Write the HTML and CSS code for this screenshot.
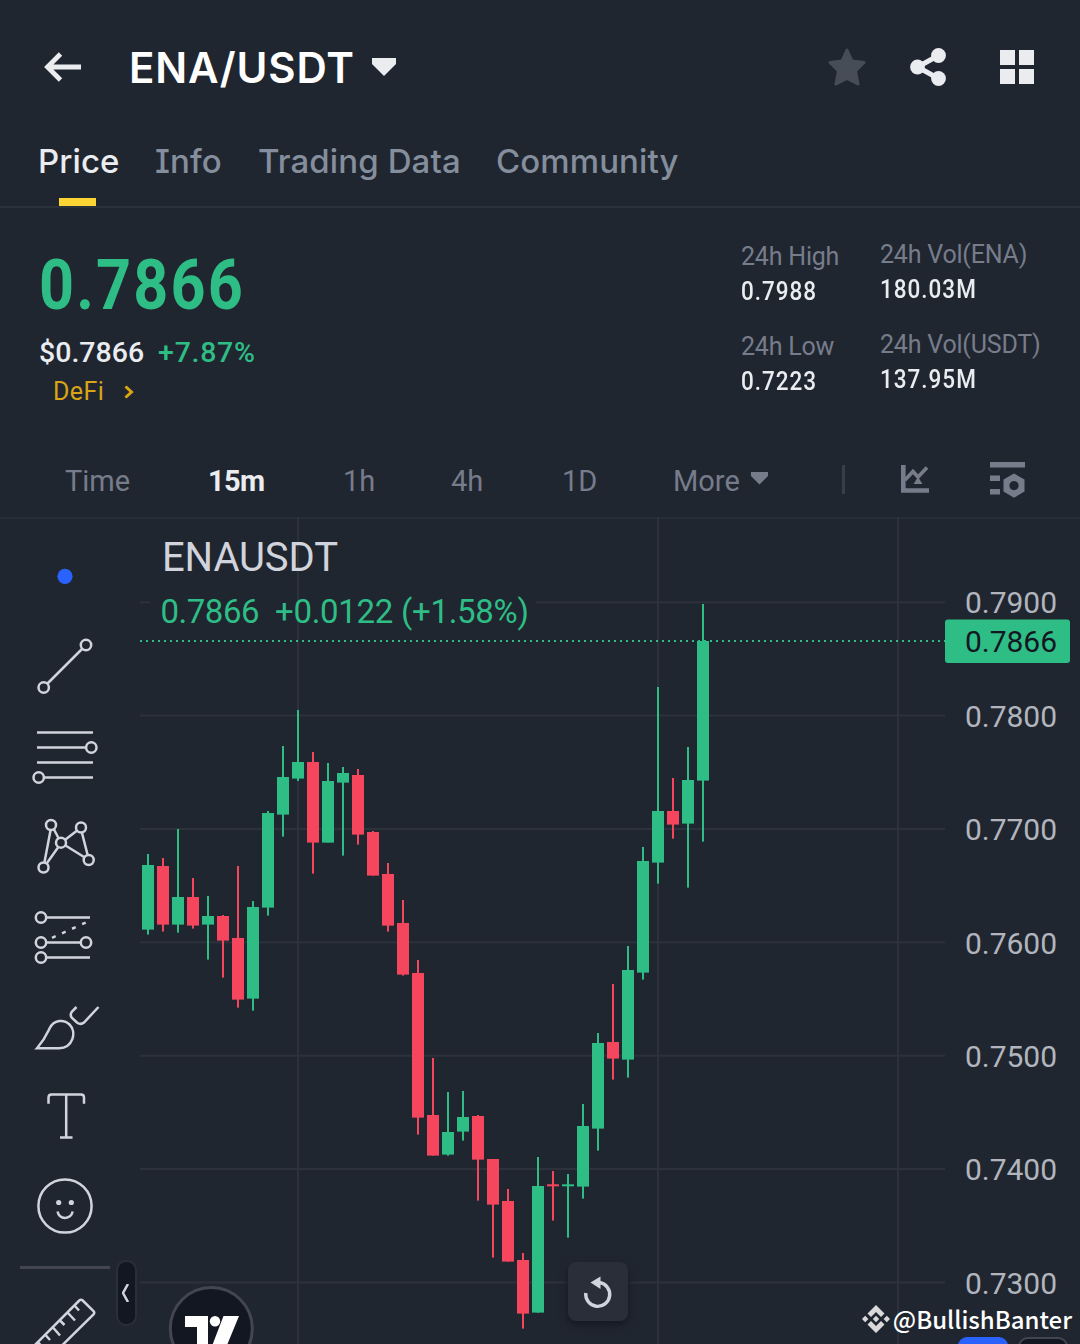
FILE: index.html
```html
<!DOCTYPE html>
<html lang="en">
<head>
  <meta charset="UTF-8">
  <meta name="viewport" content="width=device-width, initial-scale=1.0">
  <title>ENA/USDT</title>
  <link rel="stylesheet" href="styles.css">
</head>
<body>
  <header class="topbar">
    <svg class="back" width="40" height="32" viewBox="0 0 40 32"><path d="M38 16H4M17.500 3L4.500 16L17.500 29" fill="none" stroke="#eaecef" stroke-width="4.800"/></svg>
    <h1>ENA/USDT</h1>
    <svg width="24" height="18" viewBox="0 0 24 18"><path d="M0 0H24V6L12 18L0 6Z" fill="#eaecef"/></svg>
    <div class="actions">
      <svg width="38" height="38" viewBox="0 0 38 38"><path d="M19 2L24 13L36 14.500L27.500 23L30 36L19 30.500L8 36L10.500 23L2 14.500L14 13Z" fill="#474d57" stroke="#474d57" stroke-width="3" stroke-linejoin="round"/></svg>
      <svg width="36" height="38" viewBox="0 0 36 38">
        <path d="M28.500 7.500L7.500 19L28.500 30.500" fill="none" stroke="#eaecef" stroke-width="5"/>
        <g fill="#eaecef"><circle cx="28.500" cy="7.500" r="7.400"/><circle cx="7.500" cy="19" r="7.400"/><circle cx="28.500" cy="30.500" r="7.400"/></g>
      </svg>
      <svg width="34" height="34" viewBox="0 0 34 34"><path d="M0 0H15V15H0ZM19 0H34V15H19ZM0 19H15V34H0ZM19 19H34V34H19Z" fill="#eaecef"/></svg>
    </div>
  </header>

  <nav class="tabs">
    <a class="active">Price</a>
    <a>Info</a>
    <a>Trading Data</a>
    <a>Community</a>
  </nav>

  <section class="summary">
    <div class="quote">
      <div class="last">0.7866</div>
      <div class="change"><span>$0.7866</span><span class="up">+7.87%</span></div>
      <div class="tag">DeFi
        <svg width="10" height="14" viewBox="0 0 10 14"><path d="M1.500 1.500L7.500 7L1.500 12.500" fill="none" stroke="#d9a514" stroke-width="3"/></svg>
      </div>
    </div>
    <dl class="stats">
      <div><dt>24h High</dt><dd>0.7988</dd></div>
      <div><dt>24h Low</dt><dd>0.7223</dd></div>
    </dl>
    <dl class="stats volume">
      <div><dt>24h Vol(ENA)</dt><dd>180.03M</dd></div>
      <div><dt>24h Vol(USDT)</dt><dd>137.95M</dd></div>
    </dl>
  </section>

  <div class="intervals">
    <span>Time</span>
    <span class="active">15m</span>
    <span>1h</span>
    <span>4h</span>
    <span>1D</span>
    <span class="more">More <svg width="17" height="13" viewBox="0 0 17 13"><path d="M0 0H17V4L8.500 12.500L0 4Z" fill="#777c8b"/></svg></span>
    <i class="separator"></i>
    <svg class="chart-type" width="28" height="28" viewBox="0 0 28 28">
      <path d="M2.300 0V25.500H28" fill="none" stroke="#777c8b" stroke-width="4.600"/>
      <path d="M4 15L12 6.500L17 12L26 2.500" fill="none" stroke="#777c8b" stroke-width="3.600"/>
      <path d="M17 12L21.500 19H12.500Z" fill="#777c8b"/>
    </svg>
    <svg width="36" height="36" viewBox="0 0 36 36">
      <path d="M0 0H35V5.500H0ZM0 13.500H10V19H0ZM0 27H10V32.500H0Z" fill="#777c8b"/>
      <path fill-rule="evenodd" d="M24 11.500L34.500 17.500V29.500L24 35.800L13.500 29.500V17.500ZM24 19a4.600 4.600 0 1 0 0.010 0Z" fill="#777c8b"/>
    </svg>
  </div>

  <main class="chart">
    <aside class="tools">
      <svg viewBox="0 0 140 90"><circle cx="65" cy="45.300" r="7.600" fill="#2962ff" stroke="none"/></svg>
      <svg viewBox="0 0 140 90"><path d="M47.500 62.500L82 28"/><circle cx="86" cy="24" r="5.200"/><circle cx="43.700" cy="66.500" r="5.200"/></svg>
      <svg viewBox="0 0 140 90"><path d="M37 21.500H93M37 36.500H86M37 51.500H93M44 66.500H93"/><circle cx="91.300" cy="36.500" r="5.200"/><circle cx="38.700" cy="66.500" r="5.200"/></svg>
      <svg viewBox="0 0 140 90">
        <path d="M50.500 29.500L44.500 61M54 28.500L58.500 37M47 62L58 46.500M65.500 38.500L76.500 30M65.500 44.500L84 56M82 32L87.500 53.500"/>
        <circle cx="51" cy="24" r="5"/><circle cx="81" cy="26.500" r="5"/><circle cx="61" cy="41.700" r="5"/><circle cx="43.500" cy="66.500" r="5"/><circle cx="88.700" cy="59" r="5"/>
      </svg>
      <svg viewBox="0 0 140 90">
        <path d="M46.500 26.500H90M46.500 51.500H80.500M46.500 66.500H90"/><path d="M52 46.800L87 31" stroke-dasharray="4 7"/>
        <circle cx="41" cy="26.500" r="5.200"/><circle cx="41" cy="51.500" r="5.200"/><circle cx="86" cy="51.500" r="5.200"/><circle cx="41" cy="66.500" r="5.200"/>
      </svg>
      <svg viewBox="0 0 140 90"><path d="M37 67.200C45 58 46.500 54 49.500 47.500C54 38.500 64 38 69.500 43.500C77 51 73 67 59 67.200ZM76.500 26L72 30.500Q69.500 34 72 37L77.500 42Q81 44 84 41.500L98.500 26"/></svg>
      <svg viewBox="0 0 140 90"><path d="M48.500 32.800V26.500Q48.500 23.500 51.500 23.500H81Q84 23.500 84 26.500V32.800M66.200 23.500V66.500M60 66.500H72.500"/></svg>
      <svg viewBox="0 0 140 90"><circle cx="65" cy="45" r="26.600"/><path d="M57.500 50.500C59.500 59 70.500 59 72.700 50.500"/><g fill="#d1d4dc" stroke="none"><circle cx="58.700" cy="41.500" r="2.600"/><circle cx="71.300" cy="41.500" r="2.600"/></g></svg>
      <hr>
      <svg class="ruler" viewBox="0 0 140 75"><path d="M20 91L79.300 31.500Q81 30 82.700 31.500L93.500 42Q95 43.700 93.500 45.500L33 105M74.500 36.500L79 41.500M67.500 43.500L75 51.500M60 51.500L64.500 56M53 58.500L60 66.500M45.500 66L50 71M38 73.500L44 79.500"/></svg>
      <button class="collapse"><svg viewBox="0 0 8 18"><path d="M6 0L1 9L6 18"/></svg></button>
    </aside>

    <svg class="plot" viewBox="140 517 940 827">
      <g id="grid"></g>
      <path class="last-line" d="M140 641H945"/>
      <g id="candles"></g>
      <g id="axis"></g>
      <rect x="945" y="619.500" width="125" height="43.500" rx="3" fill="#2ebd85"/>
      <text class="axis-text current" x="965" y="652" textLength="92">0.7866</text>
      <rect x="150" y="594" width="386" height="36" fill="#202630"/>
      <path class="divider" d="M298 594V630"/>
      <text class="symbol" x="162" y="571" textLength="176">ENAUSDT</text>
      <text class="delta" x="160.500" y="623" textLength="99">0.7866</text>
      <text class="delta" x="275" y="623" textLength="254">+0.0122 (+1.58%)</text>
      <g>
        <circle cx="211.300" cy="1328.500" r="41" fill="#131722" stroke="#434651" stroke-width="3"/>
        <path d="M185 1316H208V1350H197V1327H185ZM223.500 1316H239L225 1350H210.500Z" fill="#fff"/>
        <circle cx="215" cy="1321.300" r="5.200" fill="#fff"/>
      </g>
      <g class="reset">
        <rect x="568" y="1262" width="60" height="59" rx="8" fill="#2a2e39"/>
        <path d="M585.800 1293A12 12 0 1 0 599.500 1282.500" fill="none" stroke="#d1d4dc" stroke-width="3.400"/>
        <path d="M590.500 1282.500L600.500 1276.500V1289Z" fill="#d1d4dc"/>
      </g>
      <rect x="958" y="1337" width="50" height="30" rx="9" fill="#2962ff"/>
      <rect x="1019" y="1338" width="48" height="30" rx="9" fill="#131722" stroke="#434651" stroke-width="2"/>
    </svg>

    <div class="watermark">
      <svg width="28" height="28" viewBox="0 0 28 28"><path d="M14 0L22.500 8.500L19 12L14 7L9 12L5.500 8.500ZM14 28L22.500 19.500L19 16L14 21L9 16L5.500 19.500ZM14 10.800L17.200 14L14 17.200L10.800 14ZM3.200 10.800L6.400 14L3.200 17.200L0 14ZM24.800 10.800L28 14L24.800 17.200L21.600 14Z" fill="#d9d9d9"/></svg>
      <span>@BullishBanter</span>
    </div>
  </main>

  <script>
    const UP = '#2ebd85';
    const DOWN = '#f6465d';

    // direction, high, body top, body bottom, low
    const candles = [
      [1, 854, 865, 929.6, 934.6], [0, 858, 866, 924.6, 931.6], [1, 829, 897, 924.6, 932.6],
      [0, 878, 897, 925.6, 928.6], [1, 896, 916, 924.6, 959.6], [0, 915, 916, 940.6, 977.6],
      [0, 866, 938, 999.6, 1007.6], [1, 901, 907, 998.6, 1010.6], [1, 811, 813, 907.6, 915.6],
      [1, 746, 777, 814.6, 836.6], [1, 710, 762, 778.6, 781], [0, 752, 762, 842.6, 873.6],
      [1, 763, 781, 842.6, 842.6], [1, 767, 773, 782.6, 855.6], [0, 769, 775, 834.6, 844.6],
      [0, 831, 832, 875.6, 875.6], [0, 863, 874, 925.6, 931.6], [0, 900, 923, 974.6, 975.6],
      [0, 960, 973, 1117.6, 1134.6], [0, 1058, 1115, 1155.6, 1155.6], [1, 1092, 1132, 1154.6, 1155.6],
      [1, 1091, 1117, 1131.6, 1140.6], [0, 1115, 1116, 1159.6, 1200.6], [0, 1159, 1159, 1204.6, 1257.6],
      [0, 1189, 1201, 1261.6, 1261.6], [0, 1253, 1260, 1313.6, 1328.6], [1, 1157, 1186, 1312.6, 1312.6],
      [0, 1171, 1184.3, 1186.3, 1220.6], [1, 1174, 1184.3, 1186.3, 1237.6], [1, 1104, 1126, 1186.6, 1198.6],
      [1, 1033, 1043, 1128.6, 1150.6], [0, 984, 1042, 1058.6, 1079.6], [1, 946, 970, 1059.6, 1077.6],
      [1, 847, 861, 972.6, 979.6], [1, 687, 811, 862.6, 883.6], [0, 778, 811, 824.6, 838.6],
      [1, 747, 780, 823.6, 887.6], [1, 604, 641, 780.6, 841.6]
    ];

    let bars = '';
    candles.forEach(([up, high, top, bottom, low], i) => {
      const x = 148 + i * 15;
      bars += `<g fill="${up ? UP : DOWN}"><rect x="${x - 1}" y="${high}" width="2" height="${low - high}"/>` +
        `<rect x="${x - 6}" y="${top}" width="12" height="${bottom - top}"/></g>`;
    });
    document.getElementById('candles').innerHTML = bars;

    let lines = '';
    let labels = '';
    for (let i = 0; i < 7; i++) {
      const y = 602.2 + i * 113.38;
      lines += `<path d="M140 ${y}H945"/>`;
      labels += `<text class="axis-text" x="965" y="${Math.round(y + 11.2)}" textLength="92">${(0.79 - i * 0.01).toFixed(4)}</text>`;
    }
    [298, 658, 898].forEach(x => lines += `<path d="M${x} 517V1344"/>`);
    document.getElementById('grid').innerHTML = lines;
    document.getElementById('axis').innerHTML = labels;
  </script>
</body>
</html>
```
FILE: styles.css
```css
* {
  box-sizing: border-box;
}

body {
  margin: 0;
  width: 1080px;
  height: 1344px;
  background: #202630;
  color: #eaecef;
  font-family: Roboto, sans-serif;
  overflow: hidden;
}

svg {
  display: block;
}

.topbar {
  display: flex;
  align-items: center;
  height: 133px;
  padding: 0 46px 0 43px;
}

.topbar h1 {
  width: 243px;
  margin: 3px 0 0 46px;
  font-family: Inter, sans-serif;
  font-size: 42px;
  font-weight: 600;
  line-height: 50px;
  letter-spacing: 0.8px;
  color: #fff;
  white-space: nowrap;
}

.actions {
  display: flex;
  align-items: center;
  margin-left: auto;
}

.actions svg + svg {
  margin-left: 44px;
}

.actions svg:last-child {
  margin-left: 54px;
}

.tabs {
  display: grid;
  grid-template-columns: 117px 103px 238px auto;
  height: 75px;
  padding-left: 38px;
  border-bottom: 2px solid #2a313b;
  font-family: Inter, sans-serif;
  font-feature-settings: "cv08";
  font-size: 33px;
  font-weight: 500;
  line-height: 56px;
  letter-spacing: 0.1px;
  color: #848e9c;
}

.tabs a.active {
  color: #eaecef;
}

.tabs a.active::after {
  content: "";
  display: block;
  width: 37px;
  height: 8px;
  margin: 9px 0 0 21px;
  background: #fcd535;
}

.summary {
  display: flex;
  height: 237px;
  padding-left: 39px;
}

.quote {
  width: 702px;
  padding-top: 38px;
}

/* narrow digits with open spacing */
.last {
  font-size: 69.5px;
  font-weight: 700;
  line-height: 80px;
  letter-spacing: 2.4px;
  color: #2ebd85;
  transform: scaleX(0.88);
  transform-origin: left;
}

.change {
  display: flex;
  gap: 14px;
  margin-top: 7px;
  font-size: 28.5px;
  font-weight: 500;
  line-height: 40px;
}

.up {
  color: #2ebd85;
  letter-spacing: 0.7px;
}

.tag {
  display: flex;
  align-items: center;
  gap: 20px;
  padding-left: 14px;
  font-size: 25px;
  line-height: 38px;
  letter-spacing: 0.4px;
  color: #d9a514;
}

.stats {
  width: 139px;
  margin: 0;
  padding-top: 34px;
  font-size: 25px;
  line-height: 30px;
  letter-spacing: -0.2px;
  white-space: nowrap;
}

.stats.volume {
  padding-top: 32px;
}

.stats div {
  height: 90px;
}

.stats dt {
  color: #777c8b;
}

/* narrow digits with open spacing */
.stats dd {
  margin: 5px 0 0;
  font-weight: 500;
  letter-spacing: 1.1px;
  transform: scaleX(0.9);
  transform-origin: left;
}

.intervals {
  display: grid;
  grid-template-columns: 143px 135px 108px 111px 111px 169px 59px 89px auto;
  align-items: center;
  height: 74px;
  margin-bottom: -2px;
  padding: 0 0 2px 65px;
  font-size: 29px;
  color: #777c8b;
  border-bottom: 2px solid #272d38;
}

.intervals span {
  padding-top: 1px;
}

.intervals .active {
  font-weight: 700;
  letter-spacing: -0.6px;
  color: #eaecef;
}

.more {
  display: flex;
  align-items: center;
  gap: 11px;
}

.more svg {
  margin-top: -4px;
}

.separator {
  width: 3px;
  height: 29px;
  margin-top: -2px;
  background: #373e49;
}

.chart-type {
  margin-top: -2px;
}

.chart {
  display: flex;
  position: relative;
  height: 827px;
}

.tools {
  position: relative;
  width: 140px;
  padding-top: 14px;
}

.tools svg {
  width: 140px;
  height: 90px;
  fill: none;
  stroke: #d1d4dc;
  stroke-width: 2.5;
}

.tools hr {
  width: 90px;
  height: 3px;
  margin: 15px 0 0 20px;
  border: 0;
  background: #434651;
}

.tools .ruler {
  height: 75px;
}

.collapse {
  position: absolute;
  left: 116px;
  top: 743px;
  width: 21px;
  height: 66px;
  padding: 0 0 0 4px;
  border: 2px solid #2a2e39;
  border-radius: 10px;
  background: #131722;
}

.collapse svg {
  width: 8px;
  height: 18px;
}

.plot {
  width: 940px;
  height: 827px;
}

#grid path,
.divider {
  stroke: #2c313b;
  stroke-width: 2;
}

.last-line {
  stroke: #2ebd85;
  stroke-width: 2;
  stroke-dasharray: 2 4;
}

.axis-text {
  font-size: 30px;
  fill: #b2b5be;
}

.axis-text.current {
  fill: #131722;
}

.symbol {
  font-size: 40px;
  fill: #d1d4dc;
}

.delta {
  font-size: 33px;
  fill: #2ebd85;
}

.reset {
  filter: drop-shadow(0 4px 4px #131722);
}

.watermark {
  position: absolute;
  right: 8px;
  bottom: 7px;
  display: flex;
  align-items: center;
  gap: 3px;
  font-family: "Noto Sans CJK SC", sans-serif;
  font-size: 24px;
  font-weight: 500;
  line-height: 36px;
  color: #fff;
}
```
